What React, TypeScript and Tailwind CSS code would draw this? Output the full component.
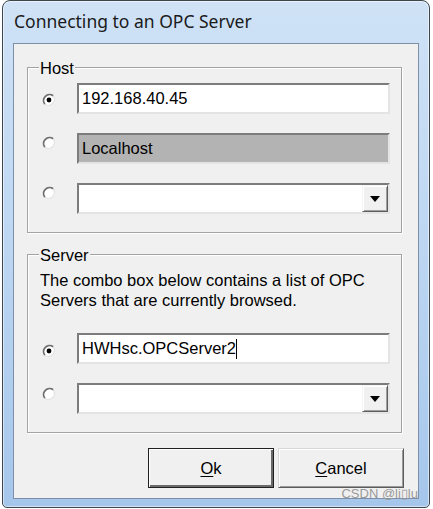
import React from "react";

function Radio({ checked, mt }: { checked?: boolean; mt: string }) {
  return (
    <div className={`w-[14px] h-[14px] ml-[14px] shrink-0 ${mt}`}>
      <svg width="14" height="14" viewBox="0 0 14 14">
        <circle cx="7" cy="7" r="6" fill="#ffffff" />
        <path d="M11.2 2.8 A6 6 0 0 0 2.8 11.2" fill="none" stroke="#6e6e6e" strokeWidth="1.8" />
        <path d="M2.8 11.2 A6 6 0 0 0 11.2 2.8" fill="none" stroke="#e2e2e2" strokeWidth="1.4" />
        {checked && <circle cx="7" cy="7" r="2.4" fill="#000000" />}
      </svg>
    </div>
  );
}

function TextBox({ children, gray }: { children?: React.ReactNode; gray?: boolean }) {
  return (
    <div
      className={`ml-[21px] mr-[11px] flex-1 h-[31px] border-2 border-t-[#7c7c7c] border-l-[#7c7c7c] border-r-[#e4e4e4] border-b-[#e4e4e4] flex items-center pl-[3px] text-[16.5px] text-black ${
        gray ? "bg-[#b3b3b3]" : "bg-white"
      }`}
    >
      {children}
    </div>
  );
}

function Combo() {
  return (
    <div className="ml-[21px] mr-[11px] flex-1 h-[31px] border-2 border-t-[#7c7c7c] border-l-[#7c7c7c] border-r-[#e4e4e4] border-b-[#e4e4e4] bg-white flex justify-end">
      <div className="w-[26px] h-full bg-[#f0f0f0] border border-t-[#f4f4f4] border-l-[#f4f4f4] border-r-[#5e5e5e] border-b-[#5e5e5e] shadow-[inset_1px_1px_0_#ffffff,inset_-1px_-1px_0_#a0a0a0] flex items-center justify-center">
        <svg width="10" height="6" viewBox="0 0 10 6">
          <path d="M0 0 L10 0 L5 6 Z" fill="#000000" />
        </svg>
      </div>
    </div>
  );
}

function Group({ label, children, className }: { label: string; children: React.ReactNode; className: string }) {
  return (
    <div
      className={`relative ml-[13px] mr-[16px] border border-[#a3a3a3] shadow-[inset_1px_1px_0_#ffffff,1px_1px_0_#ffffff] ${className}`}
    >
      <div className="absolute left-[11px] -top-[9px] px-[1px] bg-[#f0f0f0] text-[16.5px] leading-[18px] text-black">
        {label}
      </div>
      {children}
    </div>
  );
}

export default function App() {
  return (
    <div className="w-[433px] h-[509px] bg-white relative overflow-hidden font-['Liberation_Sans',Arial,sans-serif]">
      <div className="ml-[2px] w-[428px] h-[508px] rounded-t-[8px] rounded-b-[5px] border border-[#3e454d] bg-gradient-to-b from-[#cfe2f6] via-[#bcd6f2] to-[#a5c6eb] shadow-[inset_0_0_0_1px_rgba(255,255,255,0.5)] flex flex-col">
        <div className="h-[42px] shrink-0 pl-[11px] pt-[8px] font-['Noto_Sans',sans-serif] text-[17.5px] leading-[24px] text-[#1b1b1b]">
          Connecting to an OPC Server
        </div>
        <div className="mx-[10px] mb-[8px] flex-1 border border-[#7d90a8] bg-[#f0f0f0] flex flex-col">
          <Group label="Host" className="mt-[23px] pt-[15px] pb-[18px] flex flex-col gap-[19px]">
            <div className="flex items-start">
              <Radio checked mt="mt-[10px]" />
              <TextBox>192.168.40.45</TextBox>
            </div>
            <div className="flex items-start">
              <Radio mt="mt-[3px]" />
              <TextBox gray>Localhost</TextBox>
            </div>
            <div className="flex items-start">
              <Radio mt="mt-[3px]" />
              <Combo />
            </div>
          </Group>

          <Group label="Server" className="mt-[21px] pt-[15px] pb-[18px] flex flex-col">
            <div className="pl-[12px] text-[16.5px] leading-[20px] text-black">
              The combo box below contains a list of OPC
              <br />
              Servers that are currently browsed.
            </div>
            <div className="flex items-start mt-[23px]">
              <Radio checked mt="mt-[11px]" />
              <TextBox>
                <span>HWHsc.OPCServer2</span>
                <span className="inline-block w-[1px] h-[20px] bg-black" />
              </TextBox>
            </div>
            <div className="flex items-start mt-[19px]">
              <Radio mt="mt-[4px]" />
              <Combo />
            </div>
          </Group>

          <div className="mt-[15px] mr-[14px] flex justify-end gap-[4px]">
            <div className="w-[126px] h-[40px] border border-[#202020] bg-[#f0f0f0] shadow-[inset_1px_1px_0_#ffffff,inset_-2px_-2px_0_#6a6a6a] flex items-center justify-center text-[16.5px] text-black">
              <span className="underline underline-offset-[2px] decoration-1">O</span>k
            </div>
            <div className="w-[126px] h-[40px] border border-t-[#d8d8d8] border-l-[#d8d8d8] border-r-[#5c5c5c] border-b-[#5c5c5c] bg-[#f0f0f0] shadow-[inset_1px_1px_0_#ffffff,inset_-1px_-1px_0_#9a9a9a] flex items-center justify-center text-[16.5px] text-black">
              <span className="underline underline-offset-[2px] decoration-1">C</span>ancel
            </div>
          </div>
        </div>
      </div>
      <div className="absolute right-[15px] top-[486px] text-[13px] leading-[15px] text-[#9a9a9a] font-['Liberation_Sans',Arial,sans-serif]">
        CSDN @li▯lu
      </div>
    </div>
  );
}
